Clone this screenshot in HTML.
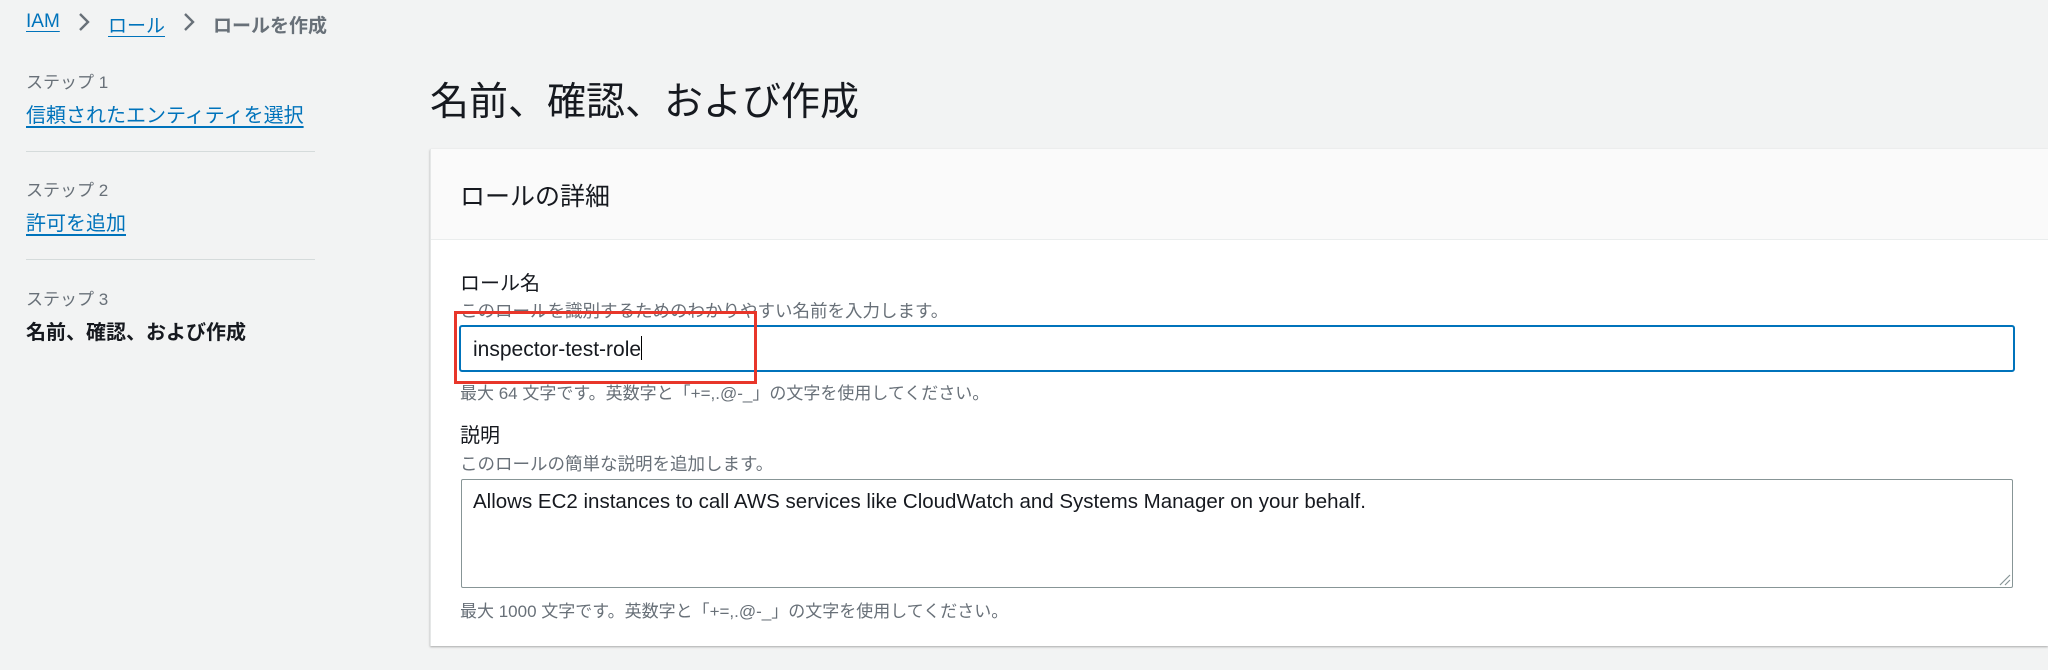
<!DOCTYPE html>
<html><head><meta charset="utf-8"><style>
*{box-sizing:border-box;margin:0;padding:0}
body{width:2048px;height:670px;background:#f2f3f3;font-family:"Liberation Sans","Noto Sans CJK JP",sans-serif;color:#16191f;position:relative;overflow:hidden}
.a{position:absolute;white-space:nowrap}
.lnk{color:#0073bb;text-decoration:underline;text-underline-offset:4px}
.g{color:#687078}
.sep{position:absolute;left:26px;width:289px;height:1px;background:#d5dbdb}
.chev{position:absolute;top:12px}
</style></head><body>
<div class="a lnk" style="left:26px;top:11px;font-size:19px">IAM</div>
<svg class="chev" style="left:78px" width="12" height="20" viewBox="0 0 12 20"><path d="M2 2l8 8-8 8" fill="none" stroke="#687078" stroke-width="2.4"/></svg>
<div class="a lnk" style="left:108px;top:11px;font-size:19px">ロール</div>
<svg class="chev" style="left:183px" width="12" height="20" viewBox="0 0 12 20"><path d="M2 2l8 8-8 8" fill="none" stroke="#687078" stroke-width="2.4"/></svg>
<div class="a g" style="left:213px;top:11px;font-size:19px;font-weight:bold">ロールを作成</div>

<div class="a g" style="left:26px;top:68px;font-size:17px">ステップ 1</div>
<div class="a lnk" style="left:26px;top:99px;font-size:20px">信頼されたエンティティを選択</div>
<div class="sep" style="top:151px"></div>
<div class="a g" style="left:26px;top:176px;font-size:17px">ステップ 2</div>
<div class="a lnk" style="left:26px;top:207px;font-size:20px">許可を追加</div>
<div class="sep" style="top:259px"></div>
<div class="a g" style="left:26px;top:285px;font-size:17px">ステップ 3</div>
<div class="a" style="left:26px;top:316px;font-size:20px;font-weight:bold">名前、確認、および作成</div>

<div class="a" style="left:430px;top:71px;font-size:39px">名前、確認、および作成</div>

<div class="a" style="left:430px;top:149px;width:1618px;height:497px;background:#fff;border-left:1px solid #e5e7e7;box-shadow:0 1px 2px rgba(0,0,0,.3)">
 <div style="height:91px;background:#fafafa;border-bottom:1px solid #eaeded"></div>
</div>
<div class="a" style="left:460px;top:177px;font-size:25px">ロールの詳細</div>

<div class="a" style="left:460px;top:267px;font-size:20px">ロール名</div>
<div class="a g" style="left:460px;top:298px;font-size:17.5px">このロールを識別するためのわかりやすい名前を入力します。</div>
<div class="a" style="left:459px;top:325px;width:1556px;height:47px;border:2px solid #0073bb;border-radius:3px;background:#fff"></div>
<div class="a" style="left:473px;top:336px;font-size:21px">inspector-test-role<span style="display:inline-block;width:1px;height:24px;background:#000;vertical-align:-4px"></span></div>
<div class="a" style="left:454px;top:311px;width:303px;height:73px;border:3px solid #e8362a"></div>
<div class="a g" style="left:460px;top:379px;font-size:17px">最大 64 文字です。英数字と「+=,.@-_」の文字を使用してください。</div>

<div class="a" style="left:460px;top:419px;font-size:20px">説明</div>
<div class="a g" style="left:460px;top:451px;font-size:17.5px">このロールの簡単な説明を追加します。</div>
<div class="a" style="left:461px;top:479px;width:1552px;height:109px;border:1px solid #879596;border-radius:2px;background:#fff"></div>
<svg class="a" style="left:1999px;top:574px" width="12" height="12"><path d="M1 11L11 1M6 11L11 6" stroke="#879596" stroke-width="1.2"/></svg>
<div class="a" style="left:473px;top:490px;font-size:20.5px">Allows EC2 instances to call AWS services like CloudWatch and Systems Manager on your behalf.</div>
<div class="a g" style="left:460px;top:597px;font-size:17px">最大 1000 文字です。英数字と「+=,.@-_」の文字を使用してください。</div>
</body></html>
